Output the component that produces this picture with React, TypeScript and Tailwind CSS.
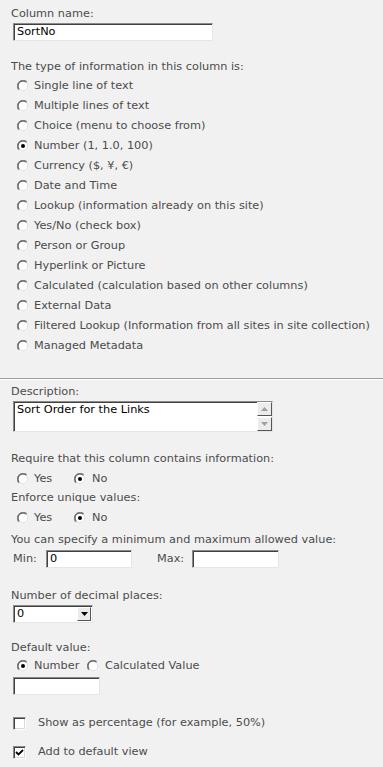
import React from "react";

const types = [
  "Single line of text",
  "Multiple lines of text",
  "Choice (menu to choose from)",
  "Number (1, 1.0, 100)",
  "Currency ($, ¥, €)",
  "Date and Time",
  "Lookup (information already on this site)",
  "Yes/No (check box)",
  "Person or Group",
  "Hyperlink or Picture",
  "Calculated (calculation based on other columns)",
  "External Data",
  "Filtered Lookup (Information from all sites in site collection)",
  "Managed Metadata",
];

// classic sunken radio button
function Radio({ checked = false }: { checked?: boolean }) {
  return (
    <svg width="12" height="12" viewBox="0 0 12 12" className="shrink-0">
      <circle cx="6" cy="6" r="5" fill="#ffffff" />
      <path d="M1.76 10.24 A6 6 0 0 1 10.24 1.76" fill="none" stroke="#8a8a8a" strokeWidth="1" />
      <path d="M2.46 9.54 A5 5 0 0 1 9.54 2.46" fill="none" stroke="#404040" strokeWidth="1" />
      <path d="M10.24 1.76 A6 6 0 0 1 1.76 10.24" fill="none" stroke="#ffffff" strokeWidth="1" />
      <path d="M9.54 2.46 A5 5 0 0 1 2.46 9.54" fill="none" stroke="#d8d8d8" strokeWidth="1" />
      {checked && <circle cx="6" cy="6" r="2" fill="#000000" />}
    </svg>
  );
}

function Checkbox({ checked = false }: { checked?: boolean }) {
  return (
    <div className="w-[13px] h-[13px] shrink-0 bg-white border border-t-[#8a8a8a] border-l-[#8a8a8a] border-r-white border-b-white shadow-[inset_1px_1px_0_#404040,inset_-1px_-1px_0_#d8d8d8] flex items-center justify-center">
      {checked && (
        <svg width="9" height="9" viewBox="0 0 9 9">
          <path d="M1 4 L3.5 6.5 L8 2" fill="none" stroke="#000" strokeWidth="1.8" />
        </svg>
      )}
    </div>
  );
}

const sunken =
  "bg-white border border-t-[#8a8a8a] border-l-[#8a8a8a] border-r-[#e6e6e6] border-b-[#e6e6e6] shadow-[inset_1px_1px_0_#404040]";

function TextBox({ className = "", value = "" }: { className?: string; value?: string }) {
  return (
    <div className={`${sunken} h-[18px] px-[3px] flex items-center text-black ${className}`}>
      {value}
    </div>
  );
}

function Arrow({ up, color }: { up?: boolean; color: string }) {
  return (
    <svg width="7" height="4" viewBox="0 0 7 4">
      <path d={up ? "M0 4 L3.5 0 L7 4 Z" : "M0 0 L7 0 L3.5 4 Z"} fill={color} />
    </svg>
  );
}

function ScrollButton({ up }: { up?: boolean }) {
  return (
    <div className="h-[14px] w-[15px] bg-[#ececec] border border-t-white border-l-white border-r-[#555] border-b-[#555] flex items-center justify-center">
      <Arrow up={up} color="#a0a0a0" />
    </div>
  );
}

export default function App() {
  return (
    <div
      className="w-full min-h-[767px] bg-[#f1f1f1] text-[#4c4c4c] text-[11.3px] leading-[14px]"
      style={{ fontFamily: "Verdana, 'DejaVu Sans', sans-serif" }}
    >
      <div className="px-[11px] pt-[7px]">
        <div>Column name:</div>
        <TextBox className="mt-[2px] ml-[2px] w-[200px]" value="SortNo" />
        <div className="mt-[19px]">The type of information in this column is:</div>
        <div className="mt-[2px]">
          {types.map((t, i) => (
            <div key={t} className="h-[20px] flex items-center pl-[6px] gap-[5px]">
              <Radio checked={i === 3} />
              <span>{t}</span>
            </div>
          ))}
        </div>
      </div>

      <div className="mt-[22px] border-t border-t-[#9c9c9c] border-b border-b-white" />

      <div className="px-[11px] pt-[5px]">
        <div>Description:</div>
        <div className={`${sunken} mt-[2px] ml-[2px] w-[260px] h-[31px] flex`}>
          <div className="flex-1 px-[3px] pt-[1px] text-black">Sort Order for the Links</div>
          <div className="flex flex-col justify-between">
            <ScrollButton up />
            <ScrollButton />
          </div>
        </div>

        <div className="mt-[20px]">Require that this column contains information:</div>
        <div className="mt-[3px] h-[20px] flex items-center pl-[6px]">
          <Radio />
          <span className="ml-[5px] w-[40px]">Yes</span>
          <Radio checked />
          <span className="ml-[6px]">No</span>
        </div>

        <div className="mt-[2px]">Enforce unique values:</div>
        <div className="mt-[3px] h-[20px] flex items-center pl-[6px]">
          <Radio />
          <span className="ml-[5px] w-[40px]">Yes</span>
          <Radio checked />
          <span className="ml-[6px]">No</span>
        </div>

        <div className="mt-[5px]">You can specify a minimum and maximum allowed value:</div>
        <div className="mt-[3px] flex items-center pl-[2px]">
          <span className="w-[33px]">Min:</span>
          <TextBox className="w-[86px]" value="0" />
          <span className="ml-[25px] w-[35px]">Max:</span>
          <TextBox className="w-[87px]" />
        </div>

        <div className="mt-[21px]">Number of decimal places:</div>
        <div className={`${sunken} mt-[2px] ml-[2px] w-[80px] h-[18px] flex items-center`}>
          <span className="flex-1 px-[3px] text-black">0</span>
          <div className="h-[14px] w-[14px] mr-[1px] bg-[#ececec] border border-t-white border-l-white border-r-[#555] border-b-[#555] flex items-center justify-center">
            <Arrow color="#000" />
          </div>
        </div>

        <div className="mt-[18px]">Default value:</div>
        <div className="mt-[1px] h-[20px] flex items-center pl-[6px]">
          <Radio checked />
          <span className="ml-[5px] w-[53px]">Number</span>
          <Radio />
          <span className="ml-[6px]">Calculated Value</span>
        </div>
        <TextBox className="mt-[1px] ml-[2px] w-[87px]" />

        <div className="mt-[21px] flex items-center pl-[2px] h-[14px]">
          <Checkbox />
          <span className="ml-[12px]">Show as percentage (for example, 50%)</span>
        </div>
        <div className="mt-[15px] flex items-center pl-[2px] h-[14px]">
          <Checkbox checked />
          <span className="ml-[12px]">Add to default view</span>
        </div>
      </div>
    </div>
  );
}
